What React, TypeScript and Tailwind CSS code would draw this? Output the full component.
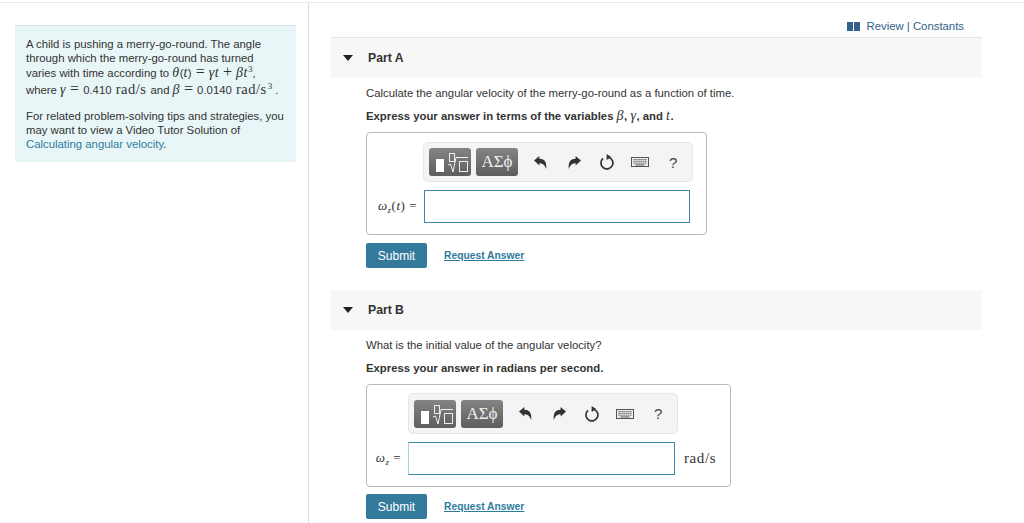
import React from "react";

const serif = "font-['Liberation_Serif','DejaVu_Serif',serif]";

function M({ children }: { children: React.ReactNode }) {
  return <span className={`${serif} font-normal italic text-[14px] tracking-[0.5px]`}>{children}</span>;
}
function R({ children }: { children: React.ReactNode }) {
  return <span className={`${serif} mx-[1px] font-normal text-[14.5px] tracking-[0.5px]`}>{children}</span>;
}
function Eq({ children }: { children: React.ReactNode }) {
  return <span className={`${serif} mx-[4px] text-[16px]`}>{children}</span>;
}
function Cube() {
  return <span className={`${serif} align-[5px] text-[9px] leading-none`}>3</span>;
}

function Book() {
  return (
    <svg width="13" height="9" viewBox="0 0 13 9" className="block">
      <rect x="0" y="0" width="6" height="9" fill="#33618a" />
      <rect x="7" y="0" width="6" height="9" fill="#33618a" />
    </svg>
  );
}

function Templates() {
  return (
    <svg width="42" height="28" viewBox="0 0 42 28" className="block">
      <rect x="7" y="11" width="8" height="13" fill="#fff" />
      <rect x="20.5" y="5.5" width="5" height="8" fill="none" stroke="#ececec" strokeWidth="1" />
      <path d="M19 17 L21.5 16 L24 24 L27 9.5 L39 9.5" fill="none" stroke="#f2f2f2" strokeWidth="1" />
      <rect x="30.5" y="13.5" width="8" height="10" fill="none" stroke="#ececec" strokeWidth="1" />
    </svg>
  );
}

function Undo() {
  return (
    <svg width="13" height="13" viewBox="0 0 13 13" className="block">
      <path d="M0 4.6 L5.4 0 L5.4 2.8 C10 2.8 13 5.6 12.2 13 C11 9.4 9.2 7.2 5.4 7.2 L5.4 9.6 Z" fill="#333" />
    </svg>
  );
}
function Redo() {
  return (
    <svg width="13" height="13" viewBox="0 0 13 13" className="block">
      <path d="M13 4.6 L7.6 0 L7.6 2.8 C3 2.8 0 5.6 0.8 13 C2 9.4 3.8 7.2 7.6 7.2 L7.6 9.6 Z" fill="#333" />
    </svg>
  );
}
function Reset() {
  return (
    <svg width="14" height="16" viewBox="0 0 14 16" className="block">
      <path d="M8.6 3.2 A6 6 0 1 1 3 4.4" fill="none" stroke="#333" strokeWidth="1.7" />
      <path d="M6.6 0 L11.2 3.1 L6.6 6 Z" fill="#333" />
    </svg>
  );
}
function Keyboard() {
  const keys: React.ReactNode[] = [];
  for (let r = 0; r < 3; r++) {
    for (let c = 0; c < 7; c++) {
      keys.push(<rect key={`${r}-${c}`} x={2.4 + c * 1.95} y={2 + r * 1.8} width="1.3" height="1.1" fill="#666" />);
    }
  }
  return (
    <svg width="18" height="10" viewBox="0 0 18 10" className="block">
      <rect x="0.5" y="0.5" width="17" height="9" fill="#eee" stroke="#555" />
      {keys}
      <rect x="4.5" y="7.4" width="9" height="1.1" fill="#666" />
    </svg>
  );
}

function Toolbar({ className }: { className: string }) {
  return (
    <div className={`flex w-[270px] items-center rounded-[5px] border border-[#e6e6e6] bg-[#f4f4f4] pl-[5px] ${className}`}>
      <div className="flex h-[28px] w-[42px] items-center justify-center rounded-[3px] bg-linear-to-b from-[#848484] to-[#5e5e5e]">
        <Templates />
      </div>
      <div className={`ml-[5px] flex h-[28px] w-[42px] items-center justify-center rounded-[3px] bg-linear-to-b from-[#848484] to-[#5e5e5e] ${serif} text-[17px] text-[#f0f0f0]`}>
        ΑΣϕ
      </div>
      <div className="ml-[16px] w-[13px]"><Undo /></div>
      <div className="ml-[21px] w-[13px]"><Redo /></div>
      <div className="ml-[19px] w-[14px]"><Reset /></div>
      <div className="ml-[17px] w-[18px]"><Keyboard /></div>
      <div className="ml-[20px] text-[15px] leading-none text-[#444]">?</div>
    </div>
  );
}

function Actions({ className }: { className: string }) {
  return (
    <div className={`flex items-center ${className}`}>
      <div className="flex h-[25px] w-[61px] items-center justify-center rounded-[2px] bg-[#337a9c] text-[12px] font-medium text-white">Submit</div>
      <a className="ml-[17px] text-[10.3px] font-bold text-[#2f7b9e] underline">Request Answer</a>
    </div>
  );
}

function PartHeader({ label }: { label: string }) {
  return (
    <div className="flex h-[40px] items-center bg-[#f7f7f7] pl-[12px]">
      <div className="h-0 w-0 border-x-[5px] border-t-[6px] border-x-transparent border-t-[#222]" />
      <span className="ml-[15px] text-[12.2px] font-bold text-[#333]">{label}</span>
    </div>
  );
}

export default function App() {
  return (
    <div className="h-[523px] w-[1024px] overflow-hidden bg-white font-['Liberation_Sans',Arial,sans-serif] text-[#333]">
      <div className="mt-[2px] h-[1px] w-full bg-[#e8eaec]" />
      <div className="flex h-[520px]">
        <aside className="w-[309px] shrink-0 border-r border-[#d5e1ea] pl-[15px] pr-[12px] pt-[22px]">
          <div className="h-[137px] w-[281px] border-t border-[#d5e3e6] bg-[#e9f6f7] pl-[11px] pr-[8px] pt-[11px] text-[11.35px] leading-[14px]">
            <p>
              A child is pushing a merry-go-round. The angle
              <br />
              through which the merry-go-round has turned
              <br />
              varies with time according to{" "}
              <span className="whitespace-nowrap">
                <M>θ</M>(<M>t</M>)<Eq>=</Eq><M>γt</M><Eq>+</Eq><M>βt</M><Cube />,
              </span>
            </p>
            <p className="mt-[2px]">
              where <M>γ</M><Eq>=</Eq>0.410 <R>rad/s</R> and <M>β</M><Eq>=</Eq>0.0140 <R>rad/s</R><Cube /> .
            </p>
            <p className="mt-[12px]">
              For related problem-solving tips and strategies, you
              <br />
              may want to view a Video Tutor Solution of
              <br />
              <a className="text-[#2f7b9e]">Calculating angular velocity</a>.
            </p>
          </div>
        </aside>
        <main className="w-[651px] shrink-0 pl-[22px]">
          <div className="flex h-[35px] w-[651px] items-start justify-end gap-[6px] border-b border-[#e4e4e4] pr-[18px] pt-[17px] text-[11.35px] leading-[13px] text-[#33618a]">
            <div className="pt-[2px]"><Book /></div>
            <span>Review | Constants</span>
          </div>
          <div className="w-[651px]">
            <PartHeader label="Part A" />
            <div className="pl-[35px] text-[11.33px] text-[#333]">
              <p className="mt-[8px] leading-[14px]">Calculate the angular velocity of the merry-go-round as a function of time.</p>
              <p className="mt-[9px] font-bold leading-[14px]">
                Express your answer in terms of the variables <M>β</M>, <M>γ</M>, and <M>t</M>.
              </p>
              <div className="mt-[9px] h-[103px] w-[341px] rounded-[4px] border border-[#b8b8b8] pl-[56px] pt-[9px]">
                <Toolbar className="h-[40px]" />
                <div className="relative ml-[1px] mt-[8px] h-[33px] w-[266px] border border-[#3f87a6] bg-white">
                  <span className={`absolute right-[272px] top-[7px] whitespace-nowrap ${serif} text-[13px] leading-[16px] tracking-[0.5px]`}>
                    <i>ω<span className="align-[-3px] text-[9px] leading-none">z</span></i>(<i>t</i>) =
                  </span>
                </div>
              </div>
              <Actions className="mt-[8px]" />
            </div>
            <div className="mt-[22px]">
              <PartHeader label="Part B" />
            </div>
            <div className="pl-[35px] text-[11.33px] text-[#333]">
              <p className="mt-[8px] leading-[14px]">What is the initial value of the angular velocity?</p>
              <p className="mt-[9px] font-bold leading-[14px]">Express your answer in radians per second.</p>
              <div className="mt-[9px] h-[103px] w-[365px] rounded-[4px] border border-[#b8b8b8] pl-[41px] pt-[8px]">
                <Toolbar className="h-[41px]" />
                <div className="relative mt-[8px] h-[33px] w-[267px] border border-[#3f87a6] border-l-[#a9cfe0] bg-white">
                  <span className={`absolute right-[273px] top-[7px] whitespace-nowrap ${serif} text-[13px] leading-[16px] tracking-[0.5px]`}>
                    <i>ω<span className="align-[-3px] text-[9px] leading-none">z</span></i> =
                  </span>
                  <span className={`absolute left-[275px] top-[7px] ${serif} text-[15px] leading-[16px] tracking-[0.6px]`}>rad/s</span>
                </div>
              </div>
              <Actions className="mt-[7px]" />
            </div>
          </div>
        </main>
      </div>
    </div>
  );
}
